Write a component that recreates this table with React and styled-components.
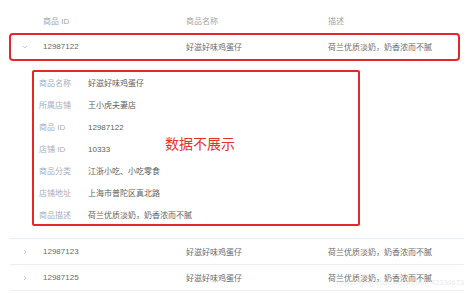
import React from 'react';
import styled, {createGlobalStyle} from 'styled-components';

const GlobalStyle = createGlobalStyle`
    body {
        margin: 0;
        background: #fff;
        font-family: "Liberation Sans", "Noto Sans CJK SC", sans-serif;
    }
`;

const Page = styled.div`
    position: relative;
    width: 474px;
    height: 293px;
    overflow: hidden;
    padding-top: 8px;
    box-sizing: border-box;
`;

const Table = styled.div`
    margin-left: 10px;
    width: 454px;
    font-size: 8px;
`;

const Row = styled.div`
    display: grid;
    grid-template-columns: 33px 143px 142px 1fr;
    align-items: center;
    height: 26px;
    box-sizing: border-box;
    border-bottom: 1px solid #ebeef5;
    color: ${p => (p.$head ? '#a2a4aa' : '#696b70')};
    ${p => p.$marked && `
        outline: 2px solid #e3272a;
        outline-offset: -1px;
        border-radius: 3px;
        margin-right: 5px;
        border-bottom-color: transparent;
    `}
`;

const Toggle = styled.div`
    display: flex;
    align-items: center;
    padding-left: 12px;
`;

const Expanded = styled.div`
    padding: 10px 0 12px 22px;
    border-bottom: 1px solid #ebeef5;
`;

const Detail = styled.div`
    position: relative;
    width: 328px;
    box-sizing: border-box;
    border: 2px solid #e3272a;
    border-radius: 2px;
    padding: 4px 0 0 5px;
`;

const Fields = styled.div`
    display: flex;
    flex-direction: column;
    gap: 6px;
`;

const Field = styled.div`
    display: flex;
    line-height: 16px;
`;

const Label = styled.span`
    width: 49px;
    color: #a7aec0;
`;

const Value = styled.span`
    color: #606266;
`;

// red remark laid over the detail panel
const Note = styled.div`
    position: absolute;
    left: 131px;
    top: 61px;
    font-size: 14px;
    line-height: 20px;
    color: #e8312b;
    font-family: "Noto Sans CJK SC", sans-serif;
`;

const Watermark = styled.div`
    position: absolute;
    right: 10px;
    bottom: 6px;
    font-size: 7.5px;
    color: rgba(215, 218, 224, 0.6);
`;

const Chevron = ({open}) => (
    <svg width="6" height="6" viewBox="0 0 6 6">
        <polyline
            points={open ? '1,2 3,4 5,2' : '2,1 4,3 2,5'}
            fill="none"
            stroke="#b8bcc4"
            strokeWidth="0.8"
        />
    </svg>
);

const goods = [
    {id: '12987122', name: '好滋好味鸡蛋仔', desc: '荷兰优质淡奶，奶香浓而不腻', open: true},
    {id: '12987123', name: '好滋好味鸡蛋仔', desc: '荷兰优质淡奶，奶香浓而不腻'},
    {id: '12987125', name: '好滋好味鸡蛋仔', desc: '荷兰优质淡奶，奶香浓而不腻'},
];

const fields = [
    ['商品名称', '好滋好味鸡蛋仔'],
    ['所属店铺', '王小虎夫妻店'],
    ['商品 ID', '12987122'],
    ['店铺 ID', '10333'],
    ['商品分类', '江浙小吃、小吃零食'],
    ['店铺地址', '上海市普陀区真北路'],
    ['商品描述', '荷兰优质淡奶，奶香浓而不腻'],
];

const App = () => {
    return (
        <>
            <GlobalStyle/>
            <Page>
                <Table>
                    <Row $head>
                        <span/>
                        <span>商品 ID</span>
                        <span>商品名称</span>
                        <span>描述</span>
                    </Row>
                    {goods.map(g => (
                        <React.Fragment key={g.id}>
                            <Row $marked={g.open}>
                                <Toggle><Chevron open={g.open}/></Toggle>
                                <span>{g.id}</span>
                                <span>{g.name}</span>
                                <span>{g.desc}</span>
                            </Row>
                            {g.open && (
                                <Expanded>
                                    <Detail>
                                        <Fields>
                                            {fields.map(([k, v]) => (
                                                <Field key={k}>
                                                    <Label>{k}</Label>
                                                    <Value>{v}</Value>
                                                </Field>
                                            ))}
                                        </Fields>
                                        <Note>数据不展示</Note>
                                    </Detail>
                                </Expanded>
                            )}
                        </React.Fragment>
                    ))}
                </Table>
                <Watermark>https://blog.csdn.net/weixin_43334673</Watermark>
            </Page>
        </>
    );
};

export default App;
